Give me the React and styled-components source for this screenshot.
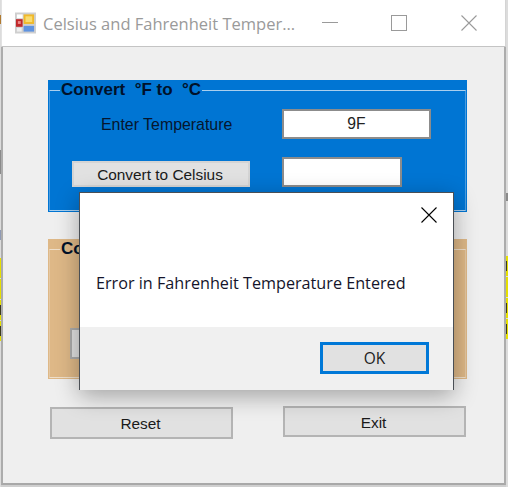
import React from 'react'
import styled, { createGlobalStyle } from 'styled-components'

const GlobalStyle = createGlobalStyle`
html, body {
    margin: 0;
    padding: 0;
    background: #fff;
}
`

const Page = styled.div`
width: 508px;
height: 490px;
display: flex;
overflow: hidden;
position: relative;
background: #fff;
font-family: "Liberation Sans", Arial, sans-serif;
color: #111;
`

const Edge = styled.div`
width: ${props => props.$width}px;
flex-shrink: 0;
height: 487px;
background: #dcdcdc;
display: flex;
flex-direction: column;
`

const EdgeMark = styled.div`
height: ${props => props.$height}px;
margin-top: ${props => props.$top}px;
background: ${props => props.$color};
flex-shrink: 0;
`

const YellowCells = styled.div`
margin-top: ${props => props.$top}px;
display: flex;
flex-direction: column;
gap: 1px;
`

const YellowCell = styled.div`
height: 20px;
background: #e6e000;
display: flex;
align-items: center;
`

const CellGlyph = styled.div`
width: 1px;
height: 10px;
background: #3a3a20;
`

const Window = styled.div`
width: 505px;
height: 485px;
flex-shrink: 0;
display: flex;
flex-direction: column;
box-shadow: 0 2px 0 #cfcfcf;
`

const TitleBar = styled.div`
height: 47px;
box-sizing: border-box;
flex-shrink: 0;
background: #fff;
border-bottom: 1px solid #c4c4c4;
border-left: 1px solid #e2e2e2;
border-right: 1px solid #d4d4d4;
display: flex;
align-items: center;
padding-left: 13px;
`

const TitleText = styled.span`
margin-left: 7px;
width: 252px;
flex-shrink: 0;
font-family: "Open Sans", sans-serif;
font-size: 16.5px;
color: #9a9a9a;
white-space: nowrap;
`

const WinButton = styled.div`
width: ${props => props.$width}px;
flex-shrink: 0;
display: flex;
justify-content: center;
color: #9a9a9a;
`

const Client = styled.div`
flex: 1;
padding: 33px 0 0 45px;
background: #efefef;
border-left: 2px solid #acacac;
border-right: 2px solid #acacac;
border-bottom: 2px solid #a8a8a8;
`

const Group = styled.div`
width: 419px;
height: ${props => props.$height}px;
box-sizing: border-box;
padding: 0 1px 1px 1px;
background: ${props => props.$bg};
display: flex;
margin-bottom: 27px;
`

const Fieldset = styled.fieldset`
flex: 1;
min-width: 0;
margin: 0;
padding: 0;
border-style: solid;
border-width: 1px;
border-color: ${props => props.$line} ${props => props.$side} ${props => props.$line} ${props => props.$side};
`

const Legend = styled.legend`
margin-left: 10px;
padding: 0 1px;
font-size: 17px;
font-weight: bold;
line-height: 20px;
color: #00112a;
white-space: pre;
`

const GroupBody = styled.div`
display: grid;
grid-template-columns: ${props => 232 - props.$inset}px 1fr;
row-gap: 18px;
padding: 9px 0 0 ${props => props.$inset}px;
`

const FieldLabel = styled.div`
display: flex;
align-items: center;
padding: 2px 0 0 29px;
font-size: 15.9px;
color: #06162e;
`

const Field = styled.div`
width: ${props => props.$width}px;
height: 30px;
box-sizing: border-box;
background: #fff;
border: 2px solid #8c8c8c;
display: flex;
align-items: center;
justify-content: center;
font-size: 15.7px;
color: #222;
`

const FormButton = styled.button`
width: ${props => props.$width}px;
height: ${props => props.$height}px;
box-sizing: border-box;
padding: 2px 2px 0 0;
margin-top: ${props => props.$top || 0}px;
background: #e1e1e1;
border: 2px solid ${props => props.$edge};
font-family: "Liberation Sans", Arial, sans-serif;
font-size: 15.4px;
color: #1a1a1a;
display: block;
`

const ButtonRow = styled.div`
width: 416px;
margin-left: 2px;
display: flex;
justify-content: space-between;
align-items: flex-start;
`

const Dialog = styled.div`
position: absolute;
left: 79px;
top: 192px;
width: 375px;
height: 198px;
box-sizing: border-box;
display: flex;
flex-direction: column;
background: #fff;
border: 1px solid #4a4f55;
border-bottom: none;
box-shadow: 0 6px 22px rgba(0, 0, 0, 0.32);
`

const DialogBody = styled.div`
flex: 1;
display: flex;
flex-direction: column;
padding: 0 0 0 16px;
`

const DialogClose = styled.div`
display: flex;
justify-content: flex-end;
padding: 14px 16px 0 0;
color: #000;
`

const DialogText = styled.div`
margin-top: 49px;
font-family: "Open Sans", sans-serif;
font-size: 16.2px;
color: #14142a;
white-space: nowrap;
`

const DialogFooter = styled.div`
height: 63px;
background: #f0f0f0;
display: flex;
justify-content: flex-end;
padding: 15px 24px 0 0;
box-sizing: border-box;
`

const OkButton = styled.button`
width: 109px;
height: 32px;
padding: 0;
box-sizing: border-box;
background: #e1e1e1;
border: 3px solid #0078d7;
font-family: "Open Sans", sans-serif;
font-size: 15.5px;
color: #222;
`

function AppIcon() {
    return (
        <svg width="22" height="22" viewBox="0 0 22 22">
            <rect x="0" y="0" width="22" height="22" fill="#cfcfcf" />
            <rect x="2" y="2" width="6" height="4" fill="#fff" />
            <rect x="2" y="16" width="5" height="4" fill="#eee" />
            <rect x="1" y="7" width="7" height="8" fill="#c0282a" />
            <rect x="3" y="9" width="3" height="3" fill="#e88" />
            <rect x="9" y="2" width="11" height="10" fill="#f0b92a" />
            <rect x="11" y="4" width="7" height="6" fill="#f9dc70" />
            <rect x="9" y="14" width="11" height="6" fill="#5f93e0" />
        </svg>
    )
}

function CrossIcon({ size, color }) {
    return (
        <svg width={size} height={size} viewBox={`0 0 ${size} ${size}`} stroke={color} strokeWidth="1.1" fill="none">
            <path d={`M0.5 0.5L${size - 0.5} ${size - 0.5}M${size - 0.5} 0.5L0.5 ${size - 0.5}`} />
        </svg>
    )
}

function App() {
    return (
        <Page>
            <GlobalStyle />
            <Edge $width={1}>
                <EdgeMark $top={15} $height={9} $color="#b07a30" />
                <EdgeMark $top={126} $height={24} $color="#8a8a8a" />
                <EdgeMark $top={56} $height={10} $color="#8f9ab5" />
                <YellowCells $top={18}>
                    <YellowCell />
                    <YellowCell />
                    <YellowCell><CellGlyph /></YellowCell>
                    <YellowCell><CellGlyph /></YellowCell>
                </YellowCells>
            </Edge>
            <Window>
                <TitleBar>
                    <AppIcon />
                    <TitleText>Celsius and Fahrenheit Temper...</TitleText>
                    <WinButton $width={69}>
                        <svg width="16" height="16" stroke="currentColor"><path d="M0 7.5H16" /></svg>
                    </WinButton>
                    <WinButton $width={69}>
                        <svg width="16" height="16" stroke="currentColor" fill="none"><rect x="0.5" y="0.5" width="15" height="15" /></svg>
                    </WinButton>
                    <WinButton $width={72}>
                        <CrossIcon size={16} color="currentColor" />
                    </WinButton>
                </TitleBar>
                <Client>
                    <Group $bg="#0075d3" $height={132}>
                        <Fieldset $line="#a9cfee" $side="#4a9ce0">
                            <Legend>Convert  °F to  °C</Legend>
                            <GroupBody $inset={22}>
                                <FieldLabel>Enter Temperature</FieldLabel>
                                <Field $width={149}>9F</Field>
                                <FormButton $width={178} $height={26} $top={4} $edge="#d4d4d4">Convert to Celsius</FormButton>
                                <Field $width={120} />
                            </GroupBody>
                        </Fieldset>
                    </Group>
                    <Group $bg="#deb887" $height={140}>
                        <Fieldset $line="#efdfca" $side="#e4c8a4">
                            <Legend>Convert  °C to  °F</Legend>
                            <GroupBody $inset={20}>
                                <FieldLabel />
                                <Field $width={149} />
                                <FormButton $width={178} $height={31} $top={12} $edge="#ababab" />
                                <Field $width={120} />
                            </GroupBody>
                        </Fieldset>
                    </Group>
                    <ButtonRow>
                        <FormButton $width={183} $height={32} $top={1} $edge="#b4b4b4">Reset</FormButton>
                        <FormButton $width={183} $height={31} $edge="#b4b4b4">Exit</FormButton>
                    </ButtonRow>
                </Client>
            </Window>
            <Edge $width={2}>
                <EdgeMark $top={193} $height={8} $color="#8a8a8a" />
                <YellowCells $top={55}>
                    <YellowCell><CellGlyph /></YellowCell>
                    <YellowCell />
                    <YellowCell><CellGlyph /></YellowCell>
                    <YellowCell><CellGlyph /></YellowCell>
                </YellowCells>
            </Edge>
            <Dialog>
                <DialogBody>
                    <DialogClose><CrossIcon size={16} color="#000" /></DialogClose>
                    <DialogText>Error in Fahrenheit Temperature Entered</DialogText>
                </DialogBody>
                <DialogFooter>
                    <OkButton>OK</OkButton>
                </DialogFooter>
            </Dialog>
        </Page>
    )
}

export default App
